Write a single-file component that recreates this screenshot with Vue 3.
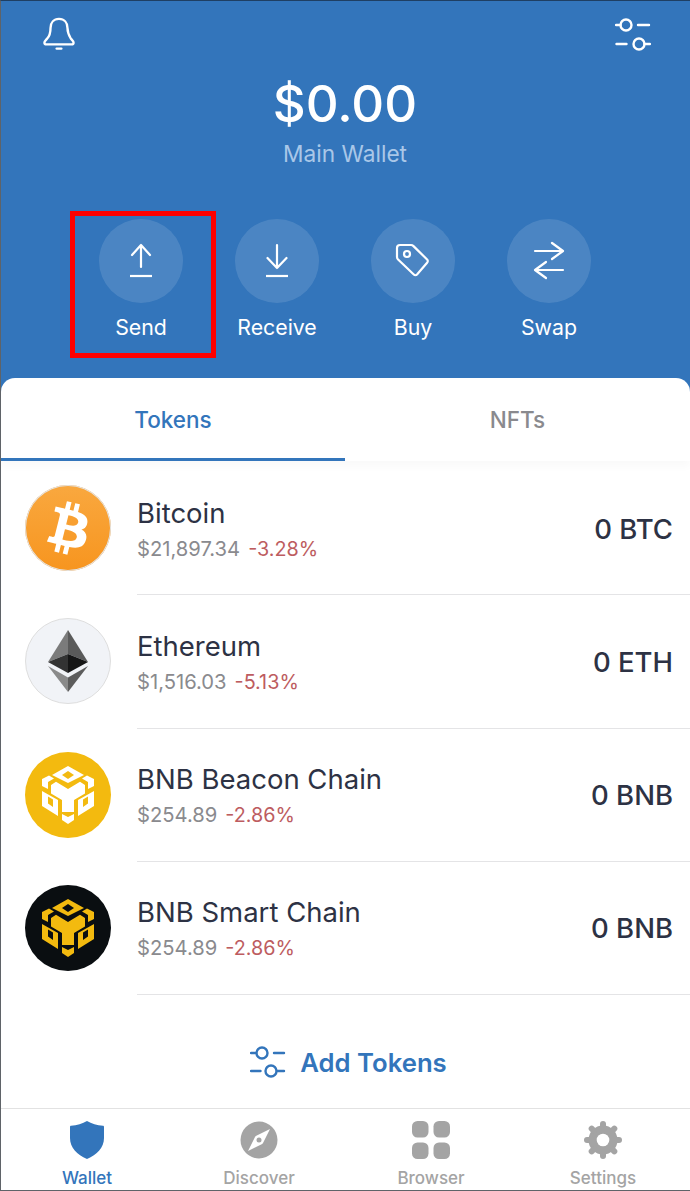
<script setup>
const actions = [
  { label: "Send", icon: "send" },
  { label: "Receive", icon: "receive" },
  { label: "Buy", icon: "buy" },
  { label: "Swap", icon: "swap" },
];

const coins = [
  { name: "Bitcoin", price: "$21,897.34", change: "-3.28%", amount: "0 BTC", logo: "btc" },
  { name: "Ethereum", price: "$1,516.03", change: "-5.13%", amount: "0 ETH", logo: "eth" },
  { name: "BNB Beacon Chain", price: "$254.89", change: "-2.86%", amount: "0 BNB", logo: "bnb" },
  { name: "BNB Smart Chain", price: "$254.89", change: "-2.86%", amount: "0 BNB", logo: "bsc" },
];
</script>

<template>
  <div class="screen">
    <header class="top">
      <div class="top-icons">
        <svg class="bell" width="32" height="34" viewBox="0 0 34 36" fill="none" stroke="#fff" stroke-width="2.5" stroke-linejoin="round">
          <path d="M17 2c-5.600 0-9 4-9 9.500 0 4.500-.6 8-3.500 11.300-1.500 1.700-3 3-3 4.400 0 1.300 1 1.800 2.500 1.800h26c1.500 0 2.500-.5 2.500-1.800 0-1.400-1.500-2.700-3-4.400C27.600 19.500 26 16 26 11.500 26 6 22.600 2 17 2z" />
          <path d="M14.500 33.500h5" stroke-linecap="round" />
        </svg>
        <svg width="36" height="36" viewBox="0 0 36 36" fill="none" stroke="#fff" stroke-width="2.4" stroke-linecap="round">
          <circle cx="11" cy="8" r="5.500" />
          <path d="M1 8h4.500M23 8h11" />
          <circle cx="24" cy="27" r="5.500" />
          <path d="M1.500 27h10M29.500 27H35" />
        </svg>
      </div>
      <div class="balance">$0.00</div>
      <div class="wallet-name">Main Wallet</div>
      <div class="actions">
        <div v-for="a in actions" :key="a.label" class="action">
          <div class="action-circle">
            <svg width="40" height="40" viewBox="0 0 40 40" fill="none" stroke="#fff" stroke-width="2.2" stroke-linecap="round" stroke-linejoin="round">
              <template v-if="a.icon === 'send'">
                <path d="M20 4v22M11 14l9-10 9 10" />
                <path d="M9 35h22" stroke-linecap="butt" />
              </template>
              <template v-else-if="a.icon === 'receive'">
                <path d="M20 4v23M10.500 17l9.500 10 9.500-10" />
                <path d="M9 35h22" stroke-linecap="butt" />
              </template>
              <template v-else-if="a.icon === 'buy'">
                <path d="M7 4h11c1 0 1.800.4 2.500 1.100l13.600 13.400c.9.900.9 2.300 0 3.200L24 33.500c-.9.900-2.300.9-3.200 0L5.100 18.500C4.400 17.800 4 17 4 16V7c0-1.700 1.300-3 3-3z" />
                <circle cx="14" cy="13" r="3" />
              </template>
              <template v-else>
                <path d="M6 10h28M23 2l11 8-11 8" />
                <path d="M34 29H6M17 21L6 29l11 8" />
              </template>
            </svg>
          </div>
          <span>{{ a.label }}</span>
        </div>
      </div>
      <div class="highlight"></div>
    </header>

    <main class="panel">
      <div class="tabs">
        <div class="tab active">Tokens</div>
        <div class="tab">NFTs</div>
      </div>

      <ul class="coins">
        <li v-for="c in coins" :key="c.name" class="coin">
          <div class="logo" :class="c.logo">
            <svg v-if="c.logo === 'btc'" width="86" height="86" viewBox="0 0 32 32">
              <path fill="#fff" d="M23.189 14.020c.314-2.096-1.283-3.223-3.465-3.975l.708-2.840-1.728-.430-.690 2.765c-.454-.114-.920-.220-1.385-.326l.695-2.783L15.596 6l-.708 2.839c-.376-.086-.746-.170-1.104-.260l.002-.009-2.384-.595-.460 1.846s1.283.294 1.256.312c.700.175.826.638.805 1.006l-.806 3.235c.048.012.110.030.180.057l-.183-.045-1.130 4.532c-.086.212-.303.531-.793.410.018.025-1.256-.313-1.256-.313l-.858 1.978 2.250.561c.418.105.828.215 1.231.318l-.715 2.872 1.727.430.708-2.840c.472.127.930.245 1.378.357l-.706 2.828 1.728.430.715-2.866c2.948.558 5.164.333 6.097-2.333.752-2.146-.037-3.385-1.588-4.192 1.130-.260 1.980-1.003 2.207-2.538zm-3.950 5.538c-.533 2.147-4.148.986-5.320.695l.950-3.805c1.172.293 4.929.872 4.370 3.110zm.535-5.569c-.487 1.953-3.495.960-4.470.717l.860-3.450c.975.243 4.118.696 3.610 2.733z" />
            </svg>
            <svg v-else-if="c.logo === 'eth'" width="40" height="62" viewBox="0 0 40 62">
              <polygon points="20,0 0,32 20,24" fill="#7b7b7b" />
              <polygon points="20,0 40,32 20,24" fill="#5a5a5a" />
              <polygon points="0,32 20,24 20,43" fill="#333" />
              <polygon points="40,32 20,24 20,43" fill="#161616" />
              <polygon points="0,36 20,47.500 20,62" fill="#8a8a8a" />
              <polygon points="40,36 20,47.500 20,62" fill="#5c5c5c" />
            </svg>
            <svg v-else width="52" height="58" viewBox="0 0 52 58" :fill="c.logo === 'bnb' ? '#fff' : '#f3ba0f'">
              <path fill-rule="evenodd" d="M26 0L42 9 26 17 10 9zM26 5L20 9l6 4 6-4z" />
              <polygon points="0,13 7,9.500 12,12.500 6,16 6,23 0,20" />
              <polygon points="52,13 45,9.500 40,12.500 46,16 46,23 52,20" />
              <polygon points="9,19 14,15.700 26,23 38,15.700 43,19 43,27.500 32,34 32,46 20,46 20,34 9,27.500" />
              <path fill-rule="evenodd" d="M0 25L16 34V50L0 40zM6 30.500V37.500L11 41V33.500z" />
              <path fill-rule="evenodd" d="M52 25L36 34V50L52 40zM46 30.500V37.500L41 41V33.500z" />
              <polygon points="20,48 26,51 32,48 32,54 26,58 20,54" />
            </svg>
          </div>
          <div class="coin-body">
            <div class="coin-info">
              <div class="coin-name">{{ c.name }}</div>
              <div class="coin-sub">
                <span class="price">{{ c.price }}</span>
                <span class="change">{{ c.change }}</span>
              </div>
            </div>
            <div class="amount">{{ c.amount }}</div>
          </div>
        </li>
      </ul>

      <div class="add-tokens">
        <svg width="36" height="36" viewBox="0 0 36 36" fill="none" stroke="#3375bb" stroke-width="2.4" stroke-linecap="round">
          <circle cx="12" cy="9" r="5.500" />
          <path d="M1 9h5M24 9h10" />
          <circle cx="21" cy="27" r="5.500" />
          <path d="M1 27h9.500M27 27h7" />
        </svg>
        <span>Add Tokens</span>
      </div>
    </main>

    <nav class="tabbar">
      <div class="nav-item on">
        <svg width="34" height="38" viewBox="0 0 34 38">
          <path fill="#3375bb" d="M17 0c4.500 2.800 10 4.300 16 4.800.5 0 1 .5 1 1V17c0 9.500-7 17-17 21C7 34 0 26.500 0 17V5.800c0-.5.500-1 1-1C7 4.300 12.500 2.800 17 0z" />
        </svg>
        <span>Wallet</span>
      </div>
      <div class="nav-item">
        <svg width="38" height="38" viewBox="0 0 38 38">
          <circle cx="19" cy="19" r="18.500" fill="#a4a4a4" />
          <path fill="#fff" d="M30 8l-7 14c-.3.600-.7 1-1.300 1.300L8 30l7-14c.3-.6.700-1 1.300-1.300z" />
          <circle cx="19" cy="19" r="2.500" fill="#a4a4a4" />
        </svg>
        <span>Discover</span>
      </div>
      <div class="nav-item">
        <svg width="38" height="38" viewBox="0 0 38 38" fill="#a4a4a4">
          <rect x="0" y="0" width="16.500" height="16.500" rx="5.500" />
          <rect x="21.500" y="0" width="16.500" height="16.500" rx="5.500" />
          <rect x="0" y="21.500" width="16.500" height="16.500" rx="5.500" />
          <rect x="21.500" y="21.500" width="16.500" height="16.500" rx="5.500" />
        </svg>
        <span>Browser</span>
      </div>
      <div class="nav-item">
        <svg width="38" height="38" viewBox="0 0 38 38">
          <g fill="#a4a4a4">
            <circle cx="19" cy="19" r="14.500" />
            <rect v-for="r in [0, 45, 90, 135, 180, 225, 270, 315]" :key="r" x="16" y="0" width="6" height="9" rx="3" :transform="`rotate(${r} 19 19)`" />
          </g>
          <circle cx="19" cy="19" r="6.300" fill="#fff" />
        </svg>
        <span>Settings</span>
      </div>
    </nav>
  </div>
</template>

<style scoped>
.screen {
  position: relative;
  width: 690px;
  height: 1191px;
  box-sizing: border-box;
  border-left: 1px solid #5f6368;
  border-top: 1px solid #1f3f63;
  border-bottom: 1px solid #5f6368;
  background: #3375bb;
  font-family: Inter, "Liberation Sans", sans-serif;
  display: flex;
  flex-direction: column;
  overflow: hidden;
}
.top {
  position: relative;
  height: 377px;
  color: #fff;
  flex: none;
  text-align: center;
}
.top-icons {
  display: flex;
  justify-content: space-between;
  padding: 16px 39px 0 42px;
  height: 36px;
}
.balance {
  font-size: 51px;
  font-weight: 500;
  line-height: 60px;
  margin-top: 21px;
  margin-left: -1px;
}
.wallet-name {
  font-size: 22.7px;
  line-height: 28px;
  color: #a9c7e8;
  margin-top: 6px;
  margin-left: -1px;
}
.actions {
  display: flex;
  margin: 51px 0 0 72px;
}
.action {
  width: 136px;
  display: flex;
  flex-direction: column;
  align-items: center;
  font-size: 21.3px;
  font-weight: 400;
  line-height: 26px;
}
.action-circle {
  width: 84px;
  height: 84px;
  border-radius: 50%;
  background: rgba(255, 255, 255, 0.12);
  display: flex;
  align-items: center;
  justify-content: center;
  margin-bottom: 11px;
}
.highlight {
  position: absolute;
  left: 69px;
  top: 210px;
  width: 146px;
  height: 147px;
  box-sizing: border-box;
  border: 5px solid #f00;
}
.panel {
  flex: 1;
  background: #fff;
  border-radius: 14px 14px 0 0;
  display: flex;
  flex-direction: column;
  min-height: 0;
}
.tabs {
  display: flex;
  height: 83px;
  flex: none;
  box-shadow: 0 6px 8px rgba(0, 0, 0, 0.025);
}
.tab {
  flex: 1;
  display: flex;
  align-items: center;
  justify-content: center;
  font-size: 22.5px;
  font-weight: 500;
  color: #8a8a8e;
  box-sizing: border-box;
}
.tab.active {
  flex: none;
  width: 344px;
  color: #3375bb;
  border-bottom: 3px solid #3375bb;
  padding-top: 3px;
}
.coins {
  list-style: none;
  margin: 1px 0 0;
  padding: 0;
}
.coin {
  height: 133.25px;
  display: flex;
  align-items: center;
}
.logo {
  width: 86px;
  height: 86px;
  margin-left: 24px;
  margin-right: 26px;
  border-radius: 50%;
  flex: none;
  box-sizing: border-box;
  display: flex;
  align-items: center;
  justify-content: center;
  overflow: hidden;
  margin-top: -1px;
}
.btc {
  background: linear-gradient(#f9a83f, #f7951f);
  box-shadow: 0 0 0 1px #e4e4e4 inset;
}
.eth {
  background: #f1f3f7;
  border: 1px solid #dedede;
}
.bnb {
  background: #f3ba0f;
}
.bsc {
  background: #0a0e11;
}
.coin-body {
  flex: 1;
  height: 100%;
  display: flex;
  align-items: center;
  justify-content: space-between;
  border-bottom: 1px solid #e4e4e6;
  box-sizing: border-box;
  padding-right: 17px;
}
.coin-info {
  padding-top: 2px;
}
.coin-name {
  font-size: 27.5px;
  font-weight: 400;
  color: #2d3244;
  line-height: 31px;
}
.coin-sub {
  font-size: 20.2px;
  line-height: 24px;
  margin-top: 8px;
  display: flex;
  gap: 8px;
}
.price {
  color: #8a8a8e;
}
.change {
  color: #bd5c60;
  font-size: 19.8px;
}
.amount {
  font-size: 27.5px;
  font-weight: 500;
  color: #2d3244;
  padding-top: 1px;
}
.add-tokens {
  height: 114px;
  flex: none;
  box-sizing: border-box;
  padding-top: 20px;
  display: flex;
  align-items: center;
  justify-content: center;
  gap: 14px;
  color: #3375bb;
  font-size: 25.7px;
  font-weight: 600;
  margin-left: 6px;
}
.tabbar {
  flex: none;
  height: 81px;
  background: #fff;
  border-top: 1px solid #e2e2e2;
  display: flex;
  margin-top: auto;
}
.nav-item {
  width: 172px;
  display: flex;
  flex-direction: column;
  align-items: center;
  padding-top: 12px;
  font-size: 17px;
  font-weight: 500;
  color: #a4a4a4;
  line-height: 20px;
  gap: 9px;
}
.nav-item.on {
  color: #3375bb;
}
</style>

<style>
html,
body {
  margin: 0;
  background: #fff;
}
</style>
